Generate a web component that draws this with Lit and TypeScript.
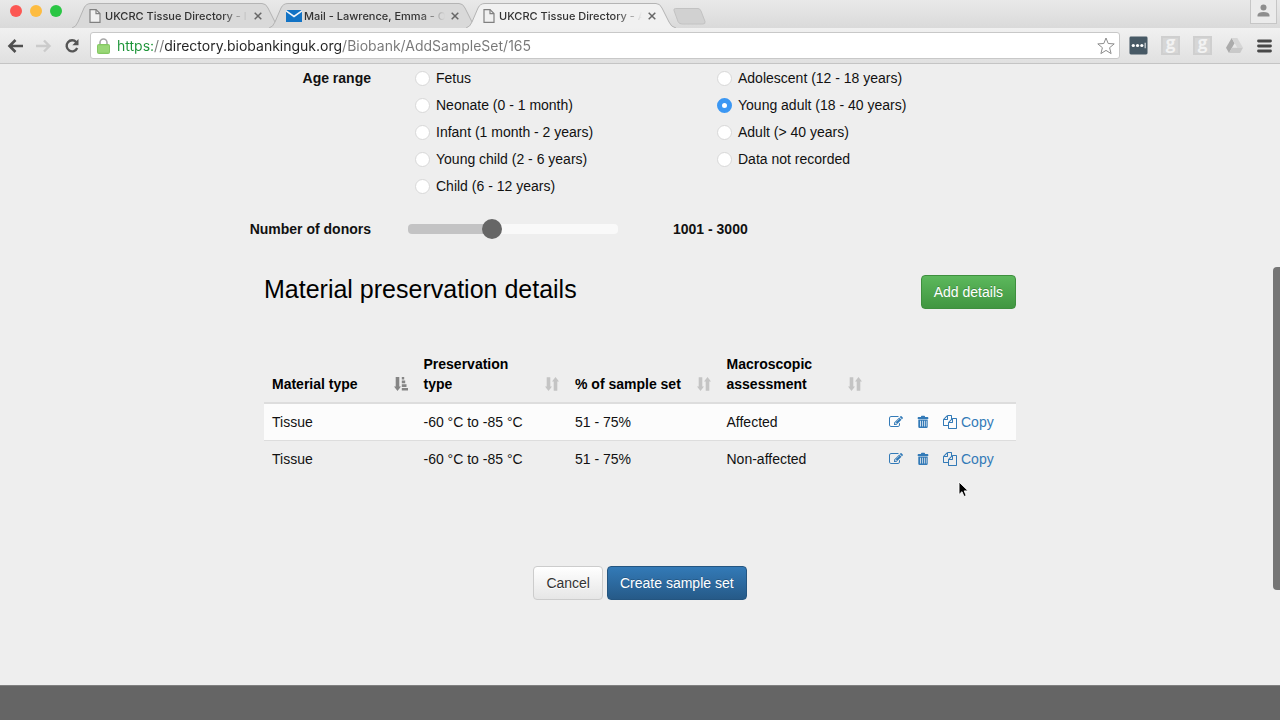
import { LitElement, html, css } from "lit";
import { customElement, state } from "lit/decorators.js";
import { classMap } from "lit/directives/class-map.js";

const EDIT =
  "M888 1184l116-116-152-152-116 116v56h96v96h56zm440-720q-16-16-33 1l-350 350q-17 17-1 33t33-1l350-350q17-17 1-33zm80 594v190q0 119-84.5 203.5t-203.5 84.5h-832q-119 0-203.5-84.5t-84.5-203.5v-832q0-119 84.5-203.5t203.5-84.5h832q63 0 117 25 15 7 18 23 3 17-9 29l-49 49q-14 14-32 8-23-6-45-6h-832q-66 0-113 47t-47 113v832q0 66 47 113t113 47h832q66 0 113-47t47-113v-126q0-13 9-22l64-64q15-15 35-7t20 29zm-96-738l288 288-672 672h-288v-288zm444 132l-92 92-288-288 92-92q28-28 68-28t68 28l152 152q28 28 28 68t-28 68z";
const COPY =
  "M1696 384q40 0 68 28t28 68v1216q0 40-28 68t-68 28h-960q-40 0-68-28t-28-68v-288h-544q-40 0-68-28t-28-68v-672q0-40 20-88t48-76l408-408q28-28 76-48t88-20h416q40 0 68 28t28 68v328q68-40 128-40h416zm-544 213l-299 299h299v-299zm-640-384l-299 299h299v-299zm196 647l316-316v-416h-384v416q0 40-28 68t-68 28h-416v640h512v-256q0-40 20-88t48-76zm956 804v-1152h-384v416q0 40-28 68t-68 28h-416v640h896z";

const editIcon = html`<svg width="14" height="14" viewBox="0 0 1792 1792" fill="currentColor" aria-hidden="true"><path d=${EDIT}></path></svg>`;
const copyIcon = html`<svg width="14" height="14" viewBox="0 0 1792 1792" fill="currentColor" aria-hidden="true"><path d=${COPY}></path></svg>`;
const trashIcon = html`<svg width="12" height="14" viewBox="0 0 12 14" aria-hidden="true">
  <path fill="currentColor" fill-rule="evenodd" d="M4 1.6Q4 .8 4.8 .8h2.4q.8 0 .8.8V2h2.6q.7 0 .7.7V4H.7V2.7Q.7 2 1.4 2H4zM1.3 4.6h9.4v7.2q0 1.2-1.2 1.2h-7q-1.2 0-1.2-1.2zM3 5.8v5.6h.8V5.8zM5.1 5.8v5.6h.7V5.8zM7 5.8v5.6h.7V5.8zM8.9 5.8v5.6h.6V5.8z"></path></svg>`;
const sortedIcon = html`<svg width="14" height="14" viewBox="0 0 14 14" fill="currentColor" aria-hidden="true">
  <path d="M1.700 0h3.600v9.500h1.700L3.500 14 0 9.500h1.700zM7.800 0h2.400v2.600H7.800zM7.800 3.600h3.400v2.600H7.800zM7.800 7.200h4.700v2.700H7.800zM7.800 10.900h6.200v2.700H7.800z"></path></svg>`;
const sortIcon = html`<svg width="14" height="14" viewBox="0 0 14 14" fill="currentColor" aria-hidden="true">
  <path d="M1.700 .3h3.600v9.200h1.700L3.500 14 0 9.500h1.700zM8.700 13.700h3.600V4.500h1.700L10.500 0 7 4.500h1.700z"></path></svg>`;
const pageIcon = html`<svg width="12" height="14" viewBox="0 0 12 14" fill="none" stroke="#808080" stroke-width="1.200" aria-hidden="true">
  <path d="M1 .6h6l4 4v8.800H1z" fill="#f0f0f0"></path><path d="M7 .6v4h4"></path></svg>`;
const mailIcon = html`<svg width="16" height="12" viewBox="0 0 16 12" aria-hidden="true">
  <path fill="#1273c5" d="M0 0h16v12H0z"></path><path fill="none" stroke="#f2f6fa" stroke-width="1.600" d="M-.5.5L8 6.500 16.500.5"></path></svg>`;

interface Tab {
  title: string;
  mail?: boolean;
  active?: boolean;
}

@customElement("browser-tabs")
class BrowserTabs extends LitElement {
  static styles = css`
    :host {
      display: flex;
      align-items: flex-end;
      height: 28px;
      background: linear-gradient(#e9e9e9, #dadada);
      font: 500 11px/16px Inter, "Noto Sans", sans-serif;
      color: #333;
    }
    button { font: inherit; color: inherit; background: none; border: 0; padding: 0; }
    .lights { display: flex; gap: 8px; align-self: flex-start; padding: 5px 10px 0; }
    .light { width: 12px; height: 12px; border-radius: 50%; }
    .close { background: #fc5753; }
    .minimise { background: #fdbc40; }
    .zoom { background: #2ac644; }
    .tabs { display: flex; flex: 1; min-width: 0; }
    .tab {
      position: relative;
      display: flex;
      align-items: center;
      width: 210px;
      height: 25px;
      margin-right: -13px;
      padding: 0 17px;
      box-sizing: border-box;
    }
    .tab.active { z-index: 1; }
    .shape { position: absolute; inset: 0; width: 100%; height: 100%; }
    .label {
      position: relative;
      display: flex;
      align-items: center;
      gap: 4px;
      flex: 1;
      min-width: 0;
      white-space: nowrap;
      mask-image: linear-gradient(90deg, #000 calc(100% - 26px), transparent);
    }
    .label.mail { gap: 2px; }
    .label svg { flex: none; }
    .x { position: relative; display: flex; margin: 0 3px 0 6px; }
    .new { margin: 0 0 3px 9px; align-self: flex-end; display: flex; }
    .profile {
      align-self: flex-start;
      display: flex;
      margin-right: 3px;
      padding: 4px 6px 6px;
      border: 1px solid #c6c6c6;
      border-top: 0;
      background: #ebebeb;
    }
  `;
  private tabs: Tab[] = [
    { title: "UKCRC Tissue Directory - I" },
    { title: "Mail - Lawrence, Emma - O", mail: true },
    { title: "UKCRC Tissue Directory - A", active: true },
  ];
  render() {
    return html`
      <div class="lights">
        <span class="light close"></span><span class="light minimise"></span><span class="light zoom"></span>
      </div>
      <div class="tabs">
        ${this.tabs.map(
          (t) => html`<div class=${classMap({ tab: true, active: !!t.active })}>
            <svg class="shape" viewBox="0 0 210 25" preserveAspectRatio="none" aria-hidden="true">
              <path d="M0 25Q4 24 6 19L12 5Q14 .5 19 .5H190Q194 .5 196 5L203 19Q205 24 210 25"
                fill=${t.active ? "#f1f1f1" : "#d9d9d9"} stroke="#b4b4b4"></path>
            </svg>
            <button class=${classMap({ label: true, mail: !!t.mail })}>${t.mail ? mailIcon : pageIcon}<span>${t.title}</span></button>
            <button class="x" aria-label="Close tab">
              <svg width="8" height="8" viewBox="0 0 8 8" stroke="#666" stroke-width="1.500"><path d="M.7.7l6.600 6.600M7.300.7L.7 7.300"></path></svg>
            </button>
          </div>`
        )}
        <button class="new" aria-label="New tab">
          <svg width="34" height="18" viewBox="0 0 34 18"><path d="M3.500 1.500H26Q28 1.500 29 4L33 14.500Q33.500 17 31 17H10Q7 17 6 14.500L2 3.500Q1.500 1.500 3.500 1.500z" fill="#d1d1d1" stroke="#c2c2c2"></path></svg>
        </button>
      </div>
      <button class="profile" aria-label="Profile">
        <svg width="13" height="13" viewBox="0 0 13 13" fill="#8e8e8e"><circle cx="6.500" cy="3.500" r="3"></circle><path d="M.5 12.500V11Q1 8 6.500 8t6 3v1.500z"></path></svg>
      </button>
    `;
  }
}

@customElement("browser-toolbar")
class BrowserToolbar extends LitElement {
  static styles = css`
    :host {
      display: flex;
      align-items: center;
      height: 36px;
      padding: 0 8px 0 7px;
      box-sizing: border-box;
      background: linear-gradient(#f1f1f1, #e0e0e0);
      border-bottom: 1px solid #c4c4c4;
    }
    button { display: flex; background: none; border: 0; padding: 0; }
    .nav { display: flex; gap: 12px; margin-right: 10px; }
    .bar {
      display: flex;
      flex: 1;
      align-items: center;
      gap: 7px;
      height: 25px;
      padding: 0 4px 0 6px;
      background: #fff;
      border: 1px solid #c8c8c8;
      border-radius: 3px;
    }
    .url {
      flex: 1;
      min-width: 0;
      border: 0;
      padding: 0;
      outline: 0;
      font: 14px/20px Inter, "Noto Sans", sans-serif;
      color: #666;
      background: linear-gradient(90deg, #1c9437 37px, #777 37px 48px, #222 48px 225px, #777 225px);
      background-clip: text;
      -webkit-text-fill-color: transparent;
    }
    .tools { display: flex; align-items: center; gap: 13px; margin-left: 9px; }
    .g {
      width: 19px;
      height: 19px;
      box-sizing: border-box;
      border: 2px solid #cfcfcf;
      background: #d6d6d6;
      color: #f2f2f2;
      justify-content: center;
      font: bold 17px/10px "Open Sans", sans-serif;
    }
  `;
  render() {
    return html`
      <div class="nav">
        <button aria-label="Back"><svg width="17" height="16" viewBox="0 0 17 16" fill="none" stroke="#505050" stroke-width="2.600"><path d="M16 8H3M8.500 2L2.500 8l6 6"></path></svg></button>
        <button aria-label="Forward"><svg width="16" height="16" viewBox="0 0 16 16" fill="none" stroke="#cbcbcb" stroke-width="2.400"><path d="M0 8h13M8 2.500L13.500 8 8 13.500"></path></svg></button>
        <button aria-label="Reload"><svg width="16" height="16" viewBox="0 0 16 16"><path d="M12.300 4.200A5.500 5.500 0 1 0 13.200 10" fill="none" stroke="#555" stroke-width="2.400"></path><path d="M14.500 1v6.200H8.300z" fill="#555"></path></svg></button>
      </div>
      <div class="bar">
        <svg width="13" height="16" viewBox="0 0 13 16" aria-hidden="true">
          <path d="M3 7V4.500a3.500 3.500 0 0 1 7 0V7" fill="none" stroke="#a7a7a7" stroke-width="1.600"></path>
          <rect x=".5" y="6.500" width="12" height="9" rx="1" fill="#92d36e" stroke="#84c763"></rect><path d="M1 9h11M1 11h11M1 13h11" stroke="#a0da80"></path>
        </svg>
        <input class="url" type="text" aria-label="Address" .value=${"https://directory.biobankinguk.org/Biobank/AddSampleSet/165"} />
        <button aria-label="Bookmark"><svg width="18" height="18" viewBox="0 0 18 18" fill="#fff" stroke="#8c8c8c"><path d="M9 1l2.200 5.500 6 .4-4.600 3.800 1.500 5.900L9 13.400l-5.100 3.200 1.500-5.900L.8 6.900l6-.4z"></path></svg></button>
      </div>
      <div class="tools">
        <button aria-label="Password manager"><svg width="19" height="19" viewBox="0 0 20 20"><rect x=".5" y=".5" width="19" height="19" rx="1.500" fill="#475965"></rect><g fill="#fff"><circle cx="4.500" cy="10" r="1.700"></circle><circle cx="9" cy="10" r="1.700"></circle><circle cx="13.500" cy="10" r="1.700"></circle><path d="M16.500 7h1v6h-1z"></path></g></svg></button>
        <button class="g" aria-label="Extension one">g</button>
        <button class="g" aria-label="Extension two">g</button>
        <button aria-label="Drive"><svg width="19" height="17" viewBox="0 0 20 18"><path d="M7 1L1 11.500 4.200 17 10 6.500z" fill="#ababab"></path><path d="M7 1h6l6 10.500h-6z" fill="#d6d6d6"></path><path d="M7.300 11.500H19L16 17H4.200z" fill="#c9c9c9"></path></svg></button>
        <button aria-label="Menu"><svg width="15" height="14" viewBox="0 0 15 14" stroke="#484848" stroke-width="2.800" stroke-linecap="round"><path d="M1.500 2h12M1.500 7h12M1.500 12h12"></path></svg></button>
      </div>
    `;
  }
}

const AGES = [
  "Fetus",
  "Neonate (0 - 1 month)",
  "Infant (1 month - 2 years)",
  "Young child (2 - 6 years)",
  "Child (6 - 12 years)",
  "Adolescent (12 - 18 years)",
  "Young adult (18 - 40 years)",
  "Adult (> 40 years)",
  "Data not recorded",
];
const DONORS = ["0 - 100", "101 - 1000", "1001 - 3000", "3001 - 5000", "5001 - 10000", "> 10000"];
const HEADS = ["Material type", "Preservation type", "% of sample set", "Macroscopic assessment"];
const ROWS = [
  ["Tissue", "-60 °C to -85 °C", "51 - 75%", "Affected"],
  ["Tissue", "-60 °C to -85 °C", "51 - 75%", "Non-affected"],
];

@customElement("sample-set-form")
class SampleSetForm extends LitElement {
  static styles = css`
    :host { display: block; padding: 4px 16px 85px; }
    * { box-sizing: border-box; }
    button { font: inherit; cursor: pointer; }
    .form {
      display: grid;
      grid-template-columns: 216px 1fr;
      column-gap: 37px;
      row-gap: 23px;
      max-width: 970px;
      margin: 0 auto;
    }
    .name { font-weight: bold; text-align: right; }
    .ages {
      display: grid;
      grid-template: repeat(5, 20px) / repeat(2, 302px);
      grid-auto-flow: column;
      row-gap: 7px;
      padding: 0 7px;
    }
    .age { display: flex; align-items: center; gap: 6px; }
    .radio {
      appearance: none;
      width: 15px;
      height: 15px;
      margin: 0;
      border: 1px solid #d8d8d8;
      border-radius: 50%;
      background: #fff;
    }
    .radio:checked { border: 5px solid #3b97f3; }
    .donors { display: flex; align-items: center; gap: 55px; font-weight: bold; }
    .track {
      display: flex;
      width: 210px;
      height: 10px;
      border-radius: 4px;
    }
    .range {
      appearance: none;
      flex: none;
      width: 230px;
      height: 20px;
      margin: -5px -10px;
      background: none;
    }
    .range::-webkit-slider-thumb {
      appearance: none;
      width: 20px;
      height: 20px;
      border-radius: 50%;
      background: #666;
    }
    .details { max-width: 752px; margin: 36px auto 0; }
    .head { display: flex; justify-content: space-between; }
    .title { margin: 0; font-size: 25px; line-height: 28px; font-weight: normal; color: #000; }
    .btn {
      height: 34px;
      padding: 0 12px;
      border: 1px solid;
      border-radius: 4px;
      color: #fff;
      text-shadow: 0 -1px 0 rgba(0, 0, 0, 0.2);
    }
    .add { background: linear-gradient(#5cb85c, #419641); border-color: #3e8f3e; }
    .create { background: linear-gradient(#337ab7, #265a88); border-color: #245580; }
    .cancel {
      background: linear-gradient(#fff, #e6e6e6);
      border-color: #ccc;
      color: #333;
      text-shadow: 0 1px 0 #fff;
    }
    .table { width: 100%; margin: 37px 0 89px; border-collapse: collapse; table-layout: fixed; }
    .table th { padding: 8px; text-align: left; vertical-align: bottom; border-bottom: 2px solid #ddd; }
    .table td { padding: 8px; border-top: 1px solid #ddd; white-space: nowrap; }
    .table tbody tr:nth-child(odd) { background: #fcfcfc; }
    .table .last { width: 146px; padding-left: 19px; }
    .sort { display: flex; justify-content: space-between; align-items: flex-end; gap: 8px; color: #c4c4c4; }
    .sort.on { color: #858585; }
    .sort span { color: #000; }
    .sort svg { flex: none; margin-bottom: 3px; }
    .actions { display: flex; align-items: center; gap: 14px; }
    .link { display: flex; align-items: center; gap: 4px; color: #337ab7; text-decoration: none; }
    .buttons { display: flex; justify-content: center; gap: 4px; }
  `;
  @state() private age = 6;
  @state() private donors = 2;
  render() {
    const pct = (this.donors / (DONORS.length - 1)) * 100;
    return html`
      <div class="form">
        <div class="name" id="age-label">Age range</div>
        <div class="ages" role="radiogroup" aria-labelledby="age-label">
          ${AGES.map(
            (a, i) => html`<label class="age">
              <input class="radio" type="radio" name="age" .checked=${i === this.age} @change=${() => (this.age = i)} />${a}
            </label>`
          )}
        </div>
        <label class="name" for="donors">Number of donors</label>
        <div class="donors">
          <div class="track" style="background: linear-gradient(90deg, #c3c3c4 ${pct}%, #f9f9f9 ${pct}%)">
            <input class="range" id="donors" type="range" min="0" max=${DONORS.length - 1} .value=${String(this.donors)}
              @input=${(e: Event) => (this.donors = Number((e.target as HTMLInputElement).value))} />
          </div>
          <output for="donors">${DONORS[this.donors]}</output>
        </div>
      </div>
      <div class="details">
        <div class="head">
          <h3 class="title">Material preservation details</h3>
          <button class="btn add">Add details</button>
        </div>
        <table class="table">
          <thead>
            <tr>
              ${HEADS.map((h, i) => html`<th scope="col"><div class=${classMap({ sort: true, on: i === 0 })}><span>${h}</span>${i === 0 ? sortedIcon : sortIcon}</div></th>`)}
              <th class="last" scope="col" aria-label="Actions"></th>
            </tr>
          </thead>
          <tbody>
            ${ROWS.map(
              (r) => html`<tr>
                ${r.map((c) => html`<td>${c}</td>`)}
                <td class="last">
                  <div class="actions">
                    <a class="link" href="#" aria-label="Edit">${editIcon}</a>
                    <a class="link" href="#" aria-label="Delete">${trashIcon}</a>
                    <a class="link" href="#">${copyIcon}Copy</a>
                  </div>
                </td>
              </tr>`
            )}
          </tbody>
        </table>
        <div class="buttons">
          <button class="btn cancel">Cancel</button>
          <button class="btn create">Create sample set</button>
        </div>
      </div>
    `;
  }
}

@customElement("app-root")
class AppRoot extends LitElement {
  static styles = css`
    :host {
      position: relative;
      display: flex;
      flex-direction: column;
      min-height: 100vh;
      background: #eee;
      color: #111;
      font: 14px/20px "Liberation Sans", Arial, sans-serif;
    }
    .footer { flex: 1; background: #656565; border-top: 1px solid #808080; box-sizing: border-box; }
    .thumb { position: absolute; right: 0; top: 267px; width: 7px; height: 323px; border-radius: 4px 0 0 4px; background: #757575; }
    .cursor { position: absolute; left: calc(50% + 318px); top: 481px; }
  `;
  render() {
    return html`
      <browser-tabs></browser-tabs>
      <browser-toolbar></browser-toolbar>
      <sample-set-form></sample-set-form>
      <footer class="footer"></footer>
      <div class="thumb"></div>
      <svg class="cursor" width="12" height="18" viewBox="0 0 12 18" aria-hidden="true">
        <path d="M1 1v12.500l3-2.800 2 4.800 2.200-.9-2-4.700h4z" fill="#000" stroke="#fff" stroke-width=".9"></path>
      </svg>
    `;
  }
}
